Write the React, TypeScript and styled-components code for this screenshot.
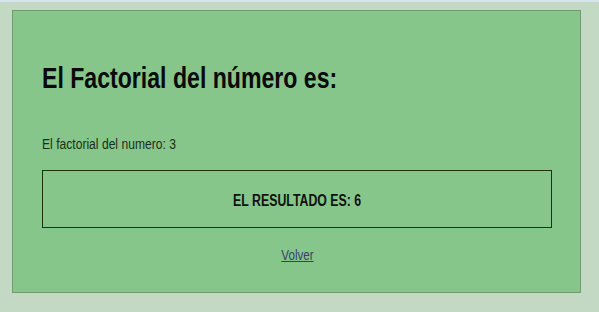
import React from 'react';
import { styled, createGlobalStyle } from 'styled-components';

const GlobalStyle = createGlobalStyle`
  html, body {
    margin: 0;
    padding: 0;
  }
  body {
    background: #c3d9c4;
    border-top: 2px solid #d6e4ec;
    font-family: 'Liberation Sans', Arial, sans-serif;
  }
`;

export default function App() {
  const numero = 3;
  const resultado = 6;
  return (
    <>
      <GlobalStyle />
      <Styled.Page>
        <Styled.Card>
          <Styled.Title>El Factorial del número es:</Styled.Title>
          <Styled.Info>El factorial del numero: {numero}</Styled.Info>
          <Styled.ResultBox>
            <Styled.ResultText>EL RESULTADO ES: {resultado}</Styled.ResultText>
          </Styled.ResultBox>
          <Styled.LinkRow>
            <Styled.BackLink href="#">Volver</Styled.BackLink>
          </Styled.LinkRow>
        </Styled.Card>
      </Styled.Page>
    </>
  );
}

// the reference uses a narrow face; squeeze the wider Liberation Sans to its widths
const Styled = {
  Page: styled.div`
    padding: 8px 18px 19px 12px;
  `,
  Card: styled.div`
    box-sizing: border-box;
    height: 283px;
    background: #86c68a;
    border: 1px solid #6d9c6e;
    padding: 49px 28px 0 29px;
  `,
  Title: styled.h1`
    margin: 0;
    font-size: 30px;
    line-height: 36px;
    font-weight: 700;
    color: #0a0a0a;
    transform: scaleX(0.77);
    transform-origin: left center;
    white-space: nowrap;
  `,
  Info: styled.p`
    margin: 40px 0 0;
    font-size: 14px;
    line-height: 16px;
    color: #1d2d1d;
    transform: scaleX(0.865);
    transform-origin: left center;
    white-space: nowrap;
  `,
  ResultBox: styled.div`
    margin-top: 18px;
    height: 58px;
    box-sizing: border-box;
    border: 1px solid #173417;
    display: flex;
    align-items: center;
    justify-content: center;
    padding-top: 3px;
  `,
  ResultText: styled.span`
    display: inline-block;
    font-size: 16px;
    font-weight: 700;
    color: #111;
    transform: scaleX(0.77);
    white-space: nowrap;
  `,
  LinkRow: styled.div`
    margin-top: 19px;
    line-height: 16px;
    text-align: center;
  `,
  BackLink: styled.a`
    display: inline-block;
    font-size: 14px;
    color: #3d3d6b;
    text-decoration: underline;
    transform: scaleX(0.83);
  `,
};
